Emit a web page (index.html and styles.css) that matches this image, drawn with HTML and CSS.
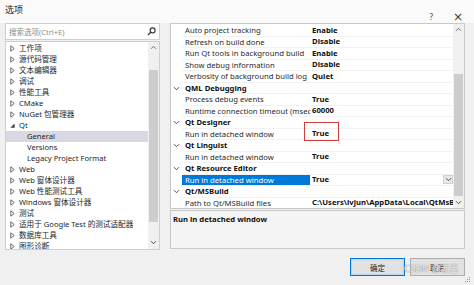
FILE: index.html
```html
<!DOCTYPE html>
<html lang="zh-CN">
<head>
    <meta charset="UTF-8">
    <title>选项</title>
    <link rel="stylesheet" href="styles.css">
</head>
<body>
    <svg width="0" height="0" class="defs">
        <symbol id="tri" viewBox="0 0 5 7"><path d="M0.8 0.8 L4.2 3.5 L0.8 6.2 Z" fill="none" stroke="#5a5a5a" stroke-width="0.9"/></symbol>
        <symbol id="tri-open" viewBox="0 0 5 7"><path d="M4.6 1.6 L4.6 5.8 L0.4 5.8 Z" fill="#3c3c3c"/></symbol>
        <symbol id="chev" viewBox="0 0 7 5"><path d="M1 1.2 L3.5 3.7 L6 1.2" fill="none" stroke="#3c3c3c" stroke-width="0.9"/></symbol>
        <symbol id="up" viewBox="0 0 7 5"><path d="M1 3.8 L3.5 1.3 L6 3.8" fill="none" stroke="#606060" stroke-width="0.9"/></symbol>
    </svg>

    <div class="dialog">
        <div class="titlebar">
            <span class="title">选项</span>
            <div class="window-buttons">
                <span class="help">?</span>
                <span class="close">×</span>
            </div>
        </div>

        <div class="main">
            <div class="left">
                <div class="search">
                    <span class="placeholder">搜索选项(Ctrl+E)</span>
                    <svg class="search-icon" width="9" height="9" viewBox="0 0 9 9"><circle cx="5.6" cy="3.4" r="2.5" fill="none" stroke="#333" stroke-width="1.1"/><path d="M3.8 5.2 L1 8" stroke="#333" stroke-width="1.3"/></svg>
                </div>
                <div class="tree">
                    <ul class="tree-list">
                        <li><svg class="arr"><use href="#tri"/></svg>工作项</li>
                        <li><svg class="arr"><use href="#tri"/></svg>源代码管理</li>
                        <li><svg class="arr"><use href="#tri"/></svg>文本编辑器</li>
                        <li><svg class="arr"><use href="#tri"/></svg>调试</li>
                        <li><svg class="arr"><use href="#tri"/></svg>性能工具</li>
                        <li><svg class="arr"><use href="#tri"/></svg>CMake</li>
                        <li><svg class="arr"><use href="#tri"/></svg>NuGet 包管理器</li>
                        <li><svg class="arr"><use href="#tri-open"/></svg>Qt</li>
                        <li class="child selected">General</li>
                        <li class="child">Versions</li>
                        <li class="child">Legacy Project Format</li>
                        <li><svg class="arr"><use href="#tri"/></svg>Web</li>
                        <li><svg class="arr"><use href="#tri"/></svg>Web 窗体设计器</li>
                        <li><svg class="arr"><use href="#tri"/></svg>Web 性能测试工具</li>
                        <li><svg class="arr"><use href="#tri"/></svg>Windows 窗体设计器</li>
                        <li><svg class="arr"><use href="#tri"/></svg>测试</li>
                        <li><svg class="arr"><use href="#tri"/></svg>适用于 Google Test 的测试适配器</li>
                        <li><svg class="arr"><use href="#tri"/></svg>数据库工具</li>
                        <li><svg class="arr"><use href="#tri"/></svg>图形诊断</li>
                    </ul>
                    <div class="vscroll tree-scroll">
                        <svg class="sarrow"><use href="#up"/></svg>
                        <div class="thumb"></div>
                        <svg class="sarrow"><use href="#chev"/></svg>
                    </div>
                </div>
            </div>

            <div class="right">
                <div class="grid">
                    <div class="rows">
                        <div class="row"><span class="gutter"></span><span class="name">Auto project tracking</span><span class="value">Enable</span></div>
                        <div class="row"><span class="gutter"></span><span class="name">Refresh on build done</span><span class="value">Disable</span></div>
                        <div class="row"><span class="gutter"></span><span class="name">Run Qt tools in background build</span><span class="value">Enable</span></div>
                        <div class="row"><span class="gutter"></span><span class="name">Show debug information</span><span class="value">Disable</span></div>
                        <div class="row"><span class="gutter"></span><span class="name">Verbosity of background build log</span><span class="value">Quiet</span></div>
                        <div class="row category"><span class="gutter"><svg class="chev"><use href="#chev"/></svg></span><span class="cat-name">QML Debugging</span></div>
                        <div class="row"><span class="gutter"></span><span class="name">Process debug events</span><span class="value">True</span></div>
                        <div class="row"><span class="gutter"></span><span class="name">Runtime connection timeout (msecs)</span><span class="value">60000</span></div>
                        <div class="row category"><span class="gutter"><svg class="chev"><use href="#chev"/></svg></span><span class="cat-name">Qt Designer</span></div>
                        <div class="row"><span class="gutter"></span><span class="name">Run in detached window</span><span class="value">True</span></div>
                        <div class="row category"><span class="gutter"><svg class="chev"><use href="#chev"/></svg></span><span class="cat-name">Qt Linguist</span></div>
                        <div class="row"><span class="gutter"></span><span class="name">Run in detached window</span><span class="value">True</span></div>
                        <div class="row category"><span class="gutter"><svg class="chev"><use href="#chev"/></svg></span><span class="cat-name">Qt Resource Editor</span></div>
                        <div class="row active"><span class="gutter"></span><span class="name">Run in detached window</span><span class="value">True<span class="dropdown"><svg class="chev"><use href="#chev"/></svg></span></span></div>
                        <div class="row category"><span class="gutter"><svg class="chev"><use href="#chev"/></svg></span><span class="cat-name">Qt/MSBuild</span></div>
                        <div class="row"><span class="gutter"></span><span class="name">Path to Qt/MSBuild files</span><span class="value">C:\Users\lvjun\AppData\Local\QtMsB</span></div>
                    </div>
                    <div class="vscroll grid-scroll">
                        <svg class="sarrow"><use href="#up"/></svg>
                        <div class="thumb"></div>
                        <svg class="sarrow"><use href="#chev"/></svg>
                    </div>
                    <div class="highlight"></div>
                </div>
                <div class="desc">Run in detached window</div>
            </div>
        </div>

        <div class="buttons">
            <button class="btn default">确定</button>
            <button class="btn">取消</button>
        </div>
        <span class="watermark">CSDN @老吕</span>
        <svg class="grip" width="6" height="6" viewBox="0 0 6 6"><rect x="4" y="0" width="1" height="1" fill="#999"/><rect x="2" y="2" width="1" height="1" fill="#999"/><rect x="4" y="2" width="1" height="1" fill="#999"/><rect x="0" y="4" width="1" height="1" fill="#999"/><rect x="2" y="4" width="1" height="1" fill="#999"/><rect x="4" y="4" width="1" height="1" fill="#999"/></svg>
    </div>
</body>
</html>
```

FILE: styles.css
```css
* {
    box-sizing: border-box;
}
body {
    margin: 0;
    width: 474px;
    height: 285px;
    overflow: hidden;
    background: #f0f0f0;
    font-family: "Noto Sans", "Noto Sans CJK SC", sans-serif;
    font-size: 8px;
    color: #1e1e1e;
}
.defs {
    position: absolute;
}
.dialog {
    position: relative;
    height: 285px;
    display: flex;
    flex-direction: column;
}
/* title bar */
.titlebar {
    height: 23px;
    display: flex;
    align-items: flex-start;
    padding: 0 11px 0 5px;
    background: #fafafa;
}
.title {
    flex: 1;
    font-size: 9px;
    line-height: 12px;
    padding-top: 4px;
}
.window-buttons {
    display: flex;
    align-items: center;
    gap: 20px;
    margin-top: 12px;
}
.help {
    font-size: 8px;
    line-height: 10px;
    color: #444;
}
.close {
    font-family: "DejaVu Sans", sans-serif;
    font-size: 12px;
    line-height: 10px;
    color: #3a3a3a;
}
/* main area */
.main {
    display: flex;
    gap: 10px;
    padding-left: 5px;
    height: 227px;
}
.left {
    width: 155px;
    display: flex;
    flex-direction: column;
}
.search {
    height: 17px;
    background: #fff;
    border: 1px solid #cfcfcf;
    display: flex;
    align-items: center;
    padding: 0 3px 0 3px;
}
.placeholder {
    flex: 1;
    color: #8a8a8a;
    font-size: 7.5px;
}
.search-icon {
    display: block;
}
.tree {
    flex: 1;
    margin-top: 1px;
    background: #fff;
    border: 1px solid #cfcfcf;
    display: flex;
    overflow: hidden;
}
.tree-list {
    list-style: none;
    margin: 0;
    padding: 1px 0 0 0;
    flex: 1;
}
.tree-list li {
    height: 11px;
    line-height: 11px;
    padding-left: 4px;
    display: flex;
    align-items: center;
    white-space: nowrap;
    font-size: 7.6px;
}
.arr {
    width: 5px;
    height: 7px;
    margin-right: 4px;
    flex: none;
}
.tree-list li.child {
    padding-left: 21px;
}
.tree-list li.selected {
    background: #d8d8e2;
}
/* scrollbars */
.vscroll {
    width: 11px;
    background: #f0f0f0;
    display: flex;
    flex-direction: column;
    align-items: center;
}
.sarrow {
    width: 7px;
    height: 5px;
    margin: 3px 0;
    flex: none;
}
.thumb {
    width: 9px;
    background: #cdcdcd;
}
.tree-scroll .thumb {
    margin-top: 17px;
    height: 152px;
}
.tree-scroll .sarrow:last-child {
    margin-top: auto;
    margin-bottom: 4px;
}
.grid-scroll .thumb {
    margin-top: 39px;
    height: 122px;
}
.grid-scroll .sarrow:last-child {
    margin-top: auto;
    margin-bottom: 3px;
}
/* property grid */
.right {
    width: 295px;
    display: flex;
    flex-direction: column;
}
.grid {
    position: relative;
    height: 186px;
    background: #fff;
    border: 1px solid #c8c8c8;
    display: flex;
    overflow: hidden;
    font-size: 7.7px;
}
.rows {
    flex: 1;
    padding-top: 1px;
}
.row {
    height: 11.5px;
    display: grid;
    grid-template-columns: 11px 128px 1fr;
    align-items: center;
    line-height: 11px;
    white-space: nowrap;
}
.gutter {
    height: 100%;
    display: flex;
    align-items: center;
    justify-content: center;
}
.chev {
    width: 7px;
    height: 5px;
    display: block;
}
.name, .value, .cat-name {
    height: 100%;
    overflow: hidden;
    border-bottom: 1px solid #f2f2f2;
}
.name {
    padding-left: 3px;
    color: #2a2a2a;
}
.value {
    padding-left: 2px;
    font-weight: bold;
    color: #111;
    display: flex;
    align-items: center;
}
.cat-name {
    grid-column: 2 / 4;
    padding-left: 3px;
    font-weight: bold;
    color: #111;
}
.row.active .name {
    background: #0078d7;
    color: #fff;
}
.dropdown {
    margin-left: auto;
    width: 10px;
    height: 9px;
    background: #e8e8e8;
    border: 1px solid #d0d0d0;
    display: flex;
    align-items: center;
    justify-content: center;
}
.highlight {
    position: absolute;
    left: 133px;
    top: 98px;
    width: 35px;
    height: 19px;
    border: 1.5px solid #d23c3c;
}
.desc {
    margin-top: 1px;
    height: 39px;
    border: 1px solid #c8c8c8;
    background: #f4f4f4;
    padding: 3px 2px;
    font-weight: bold;
    font-size: 7.7px;
    line-height: 10px;
    color: #111;
}
/* buttons */
.buttons {
    display: flex;
    justify-content: flex-end;
    gap: 5px;
    padding-right: 9px;
    margin-top: 8px;
}
.btn {
    width: 55px;
    height: 18px;
    background: #e1e1e1;
    border: 1px solid #adadad;
    font-family: inherit;
    font-size: 7.5px;
    color: #1e1e1e;
    padding: 0;
}
.btn.default {
    border: 1px solid #0078d7;
    box-shadow: inset 0 0 0 1px #b8d4ee;
}
.watermark {
    position: absolute;
    left: 404px;
    top: 262px;
    font-size: 9px;
    color: rgba(255, 255, 255, 0.85);
    text-shadow: 0 0 1px #8a8a8a, 0 0 1px #8a8a8a;
    letter-spacing: 0.3px;
}
.grip {
    position: absolute;
    right: 3px;
    bottom: 2px;
}
```
